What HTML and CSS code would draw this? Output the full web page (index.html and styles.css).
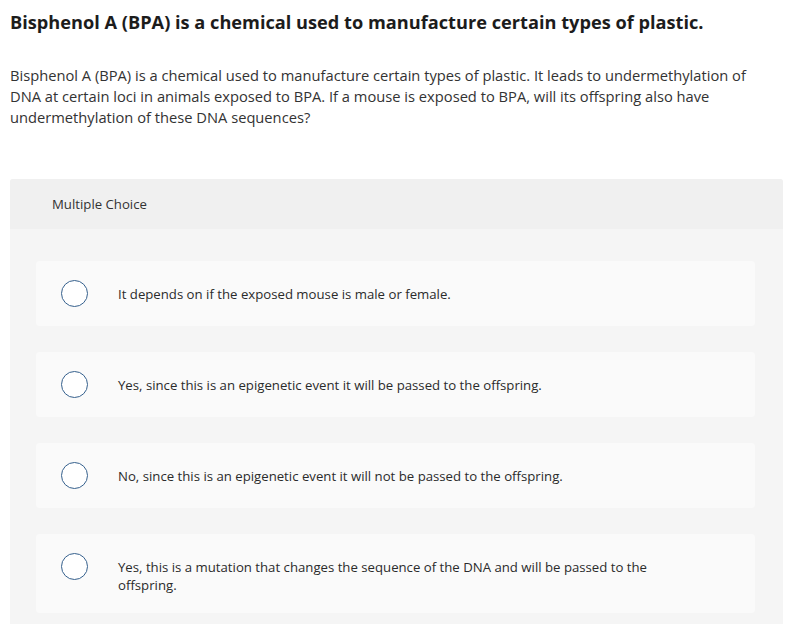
FILE: index.html
```html
<!DOCTYPE html>
<html>
<head>
<meta charset="utf-8">
<link rel="stylesheet" href="styles.css">
</head>
<body>
<div class="page">
  <h1 class="title">Bisphenol A (BPA) is a chemical used to manufacture certain types of plastic.</h1>
  <p class="prompt">Bisphenol A (BPA) is a chemical used to manufacture certain types of plastic. It leads to undermethylation of DNA at certain loci in animals exposed to BPA. If a mouse is exposed to BPA, will its offspring also have undermethylation of these DNA sequences?</p>
  <div class="question">
    <div class="q-header">Multiple Choice</div>
    <div class="q-body">
      <div class="choice"><span class="radio"></span><span class="label">It depends on if the exposed mouse is male or female.</span></div>
      <div class="choice"><span class="radio"></span><span class="label">Yes, since this is an epigenetic event it will be passed to the offspring.</span></div>
      <div class="choice"><span class="radio"></span><span class="label">No, since this is an epigenetic event it will not be passed to the offspring.</span></div>
      <div class="choice"><span class="radio"></span><span class="label">Yes, this is a mutation that changes the sequence of the DNA and will be passed to the offspring.</span></div>
    </div>
  </div>
</div>
</body>
</html>
```
FILE: styles.css
```css
html, body {
  margin: 0;
  padding: 0;
  background: #ffffff;
}
.page {
  padding: 0 7px 0 10px;
  font-family: "Open Sans", "Liberation Sans", sans-serif;
  color: #2b2b2b;
}
.title {
  margin: 0;
  padding-top: 11px;
  font-size: 18.2px;
  line-height: 22px;
  font-weight: 700;
  color: #1c1c1c;
}
.prompt {
  margin: 0;
  padding-top: 32px;
  max-width: 758px;
  font-size: 14.7px;
  line-height: 21px;
  color: #333333;
}
.question {
  margin-top: 51px;
  background: #f5f5f5;
  border-radius: 3px 3px 0 0;
  overflow: hidden;
}
.q-header {
  background: #f0f0f0;
  height: 50px;
  display: flex;
  align-items: center;
  padding-left: 42px;
  font-size: 13.2px;
  color: #333;
}
.q-body {
  padding: 32px 28px 20px 26px;
  display: flex;
  flex-direction: column;
  gap: 26px;
}
.choice {
  background: #fafafa;
  border-radius: 4px;
  padding: 19px 20px 19px 25px;
  display: flex;
  align-items: flex-start;
}
.radio {
  flex: none;
  width: 25px;
  height: 25px;
  border: 1.5px solid #35608d;
  border-radius: 50%;
  background: #fff;
}
.label {
  margin-left: 30px;
  margin-top: 5px;
  font-size: 13.2px;
  line-height: 18px;
  color: #2b2b2b;
  max-width: 560px;
}
```
